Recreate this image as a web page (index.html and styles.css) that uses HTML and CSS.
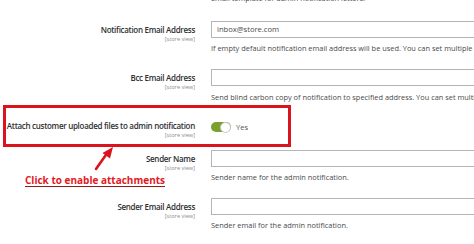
FILE: index.html
```html
<!DOCTYPE html>
<html lang="en">
<head>
    <meta charset="UTF-8">
    <title>Admin Notification Settings</title>
    <link rel="stylesheet" href="styles.css">
</head>
<body>
    <div class="page">
        <div class="top-comment">Email template for admin notification letters.</div>
        <div class="field">
            <div class="label">
                <div class="label-text">Notification Email Address</div>
                <div class="scope">[store view]</div>
            </div>
            <div class="control">
                <div class="input">inbox@store.com</div>
                <div class="note">If empty default notification email address will be used. You can set multiple</div>
            </div>
        </div>
        <div class="field">
            <div class="label">
                <div class="label-text">Bcc Email Address</div>
                <div class="scope">[store view]</div>
            </div>
            <div class="control">
                <div class="input"></div>
                <div class="note note-wide">Send blind carbon copy of notification to specified address. You can set multiple</div>
            </div>
        </div>
        <div class="field field-toggle">
            <div class="label">
                <div class="label-text">Attach customer uploaded files to admin notification</div>
                <div class="scope">[store view]</div>
            </div>
            <div class="control toggle-control">
                <div class="toggle"><div class="knob"></div></div>
                <div class="toggle-label">Yes</div>
            </div>
        </div>
        <div class="field">
            <div class="label">
                <div class="label-text">Sender Name</div>
                <div class="scope">[store view]</div>
            </div>
            <div class="control">
                <div class="input"></div>
                <div class="note">Sender name for the admin notification.</div>
            </div>
        </div>
        <div class="field">
            <div class="label">
                <div class="label-text">Sender Email Address</div>
                <div class="scope">[store view]</div>
            </div>
            <div class="control">
                <div class="input"></div>
                <div class="note">Sender email for the admin notification.</div>
            </div>
        </div>

        <div class="highlight-box"></div>
        <svg class="arrow" width="40" height="40" viewBox="0 0 40 40">
            <path d="M5 28 L14.5 14.5" stroke="#d9141c" stroke-width="2.6" stroke-linecap="round"/>
            <polygon points="22,6 19,17.5 11.5,12" fill="#d9141c"/>
        </svg>
        <div class="callout">Click to enable attachments</div>
    </div>
</body>
</html>
```

FILE: styles.css
```css
body {
    margin: 0;
    padding: 0;
    background-color: #FFFFFF;
    font-family: 'Open Sans', sans-serif;
    color: #303030;
    overflow: hidden;
}
.page {
    position: relative;
    width: 474px;
    height: 244px;
    overflow: hidden;
}
.top-comment {
    margin: -7px 0 18px 211px;
    font-size: 7.4px;
    line-height: 10px;
    color: #4a4a4a;
    white-space: nowrap;
}
.field {
    display: grid;
    grid-template-columns: 195px 300px;
    column-gap: 16px;
    margin-bottom: 16px;
}
.label {
    padding-top: 4px;
    text-align: right;
}
.label-text {
    font-size: 8px;
    line-height: 10px;
    font-weight: 600;
    letter-spacing: -0.3px;
    color: #303030;
    white-space: nowrap;
}
.scope {
    font-size: 5.6px;
    line-height: 8px;
    color: #8a8a8a;
}
.input {
    height: 15px;
    border: 1px solid #b5b5b5;
    padding-left: 5px;
    font-size: 7.6px;
    line-height: 15px;
    color: #4a4a4a;
}
.note {
    margin-top: 5px;
    font-size: 7.4px;
    line-height: 10px;
    color: #4a4a4a;
    white-space: nowrap;
}
.note-wide {
    margin-top: 6px;
}
.field-toggle {
    margin-top: -1px;
    margin-bottom: 11px;
}
.toggle-control {
    display: flex;
    align-items: center;
    padding-top: 5px;
    height: 10px;
}
.toggle {
    width: 20px;
    height: 10px;
    border-radius: 5px;
    background-color: #79a22e;
    position: relative;
}
.knob {
    position: absolute;
    right: 0;
    top: 0;
    width: 9px;
    height: 9px;
    border-radius: 50%;
    background-color: #FFFFFF;
    border: 0.5px solid #c8c8c8;
}
.toggle-label {
    margin-left: 5px;
    font-size: 7.6px;
    color: #555555;
}
.highlight-box {
    position: absolute;
    left: 3px;
    top: 105px;
    width: 282px;
    height: 36px;
    border: 3px solid #d9141c;
}
.arrow {
    position: absolute;
    left: 91px;
    top: 141px;
}
.callout {
    position: absolute;
    left: 25px;
    top: 173px;
    font-size: 10px;
    line-height: 14px;
    font-weight: 700;
    color: #e3191f;
    white-space: nowrap;
    text-decoration: underline;
    text-decoration-color: #8e1a1c;
    text-decoration-thickness: 1px;
    text-underline-offset: 2px;
}
```
